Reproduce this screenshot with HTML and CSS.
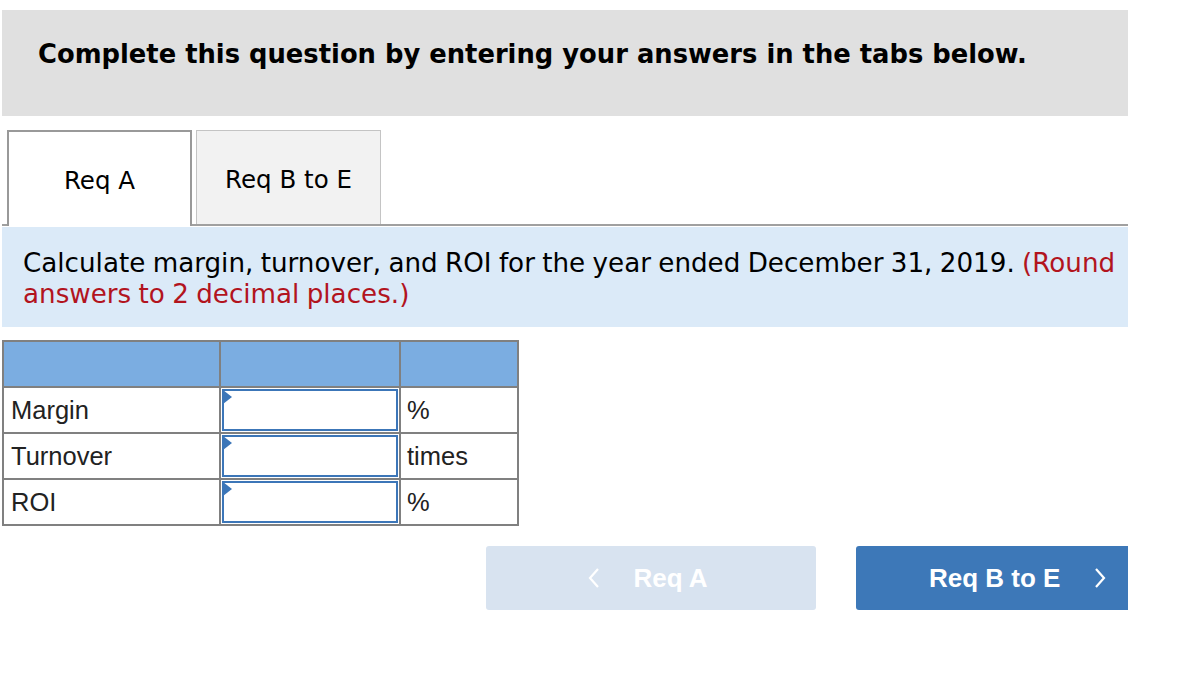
FILE: index.html
```html
<!DOCTYPE html>
<html>
<head>
<meta charset="utf-8">
<link rel="stylesheet" href="styles.css">
</head>
<body>
<div class="page">
  <div class="header">Complete this question by entering your answers in the tabs below.</div>
  <div class="tabs">
    <div class="tab active">Req A</div>
    <div class="tab">Req B to E</div>
  </div>
  <div class="info">Calculate margin, turnover, and ROI for the year ended December 31, 2019. <span class="red">(Round answers to 2 decimal places.)</span></div>
  <table class="grid">
    <tr class="head"><td class="c1"></td><td class="c2"></td><td class="c3"></td></tr>
    <tr><td class="c1">Margin</td><td class="c2"><div class="inp"><span class="tri"></span></div></td><td class="c3">%</td></tr>
    <tr><td class="c1">Turnover</td><td class="c2"><div class="inp"><span class="tri"></span></div></td><td class="c3">times</td></tr>
    <tr><td class="c1">ROI</td><td class="c2"><div class="inp"><span class="tri"></span></div></td><td class="c3">%</td></tr>
  </table>
  <div class="nav">
    <div class="btn prev"><svg class="chev" width="12" height="22" viewBox="0 0 12 22"><path d="M10 2 L2 11 L10 20" fill="none" stroke="#fff" stroke-width="2.2"/></svg><span>Req A</span></div>
    <div class="btn next"><span>Req B to E</span><svg class="chev" width="12" height="22" viewBox="0 0 12 22"><path d="M2 2 L10 11 L2 20" fill="none" stroke="#fff" stroke-width="2.2"/></svg></div>
  </div>
</div>
</body>
</html>
```
FILE: styles.css
```css
html, body { margin: 0; padding: 0; background: #fff; }
.page { width: 1126px; padding: 10px 0 0 2px; font-family: "DejaVu Sans", Verdana, sans-serif; }
.header { background: #e0e0e0; height: 106px; box-sizing: border-box; padding: 27px 0 0 36px; font-weight: bold; font-size: 25.8px; color: #000; line-height: 34px; }
.tabs { display: flex; gap: 4px; margin-top: 14px; padding-left: 5px; border-bottom: 2px solid #a0a0a0; height: 94px; }
.tab { width: 185px; height: 94px; box-sizing: border-box; border: 1px solid #c4c4c4; border-bottom: none; background: #f2f2f2; display: flex; align-items: center; justify-content: center; font-size: 24.5px; color: #000; padding-top: 4px; }
.tab.active { background: #fff; border: 2px solid #999; border-bottom: none; height: 96px; margin-bottom: -2px; padding-top: 2px; }
.info { background: #dbeaf8; height: 100px; box-sizing: border-box; padding: 21px 0 0 21px; font-size: 26.2px; line-height: 31px; color: #000; margin-top: 1px; word-spacing: -1px; }
.red { color: #b2141e; }
.grid { margin-top: 13px; border-collapse: collapse; font-family: "Liberation Sans", Arial, sans-serif; font-size: 25.5px; color: #222; }
.grid td { border: 2px solid #808080; padding: 0; box-sizing: border-box; height: 46px; }
.grid .head td { background: #7badE1; }
.grid .c1 { width: 217px; padding-left: 7px; }
.grid .c2 { width: 180px; padding: 0; vertical-align: top; }
.grid .c3 { width: 118px; padding-left: 6px; }
.inp { position: relative; height: 42px; margin: 1px; border: 2px solid #3c76b8; box-sizing: border-box; background: #fff; }
.tri { position: absolute; left: -1px; top: -1px; width: 0; height: 0; border-top: 7px solid transparent; border-bottom: 7px solid transparent; border-left: 9px solid #3c76b8; }
.nav { display: flex; justify-content: flex-end; gap: 40px; margin-top: 20px; }
.btn { height: 64px; border-radius: 3px; display: flex; align-items: center; font-family: "Liberation Sans", Arial, sans-serif; font-weight: bold; font-size: 26px; color: #fff; box-sizing: border-box; }
.prev { width: 330px; background: #d8e3f0; gap: 33px; justify-content: center; padding-right: 6px; }
.next { width: 272px; background: #3d78b8; gap: 34px; padding-left: 73px; border-radius: 3px 0 0 3px; }
.chev { display: block; }
```
